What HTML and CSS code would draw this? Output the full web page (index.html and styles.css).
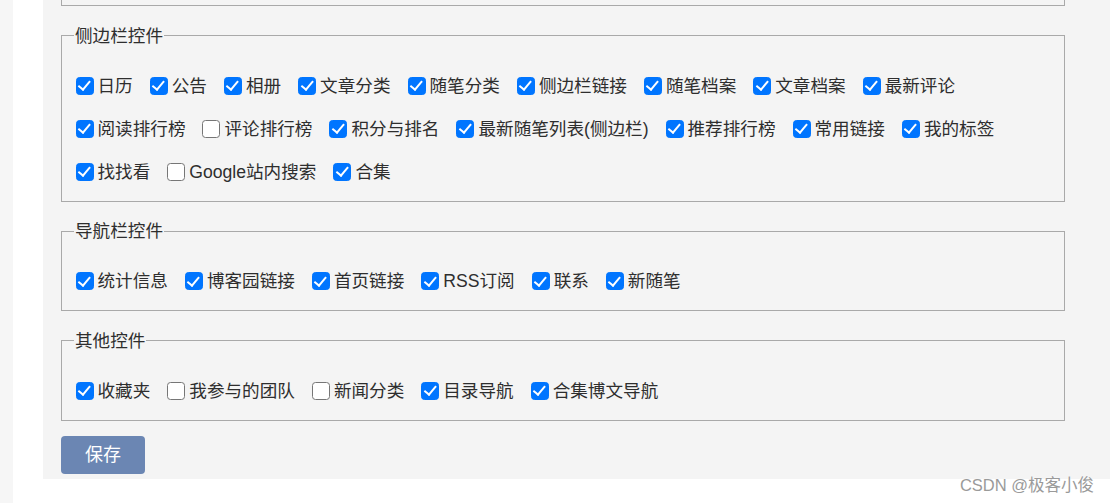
FILE: index.html
```html
<!DOCTYPE html>
<html lang="zh-CN">
<head>
<meta charset="utf-8">
<title>博客设置 - 控件</title>
<link rel="stylesheet" href="styles.css">
</head>
<body>
<div class="page">
  <div class="strip"></div>
  <div class="gutter"></div>
  <main class="panel">
    <div class="fieldset-tail"></div>

    <fieldset class="group">
      <legend>侧边栏控件</legend>
      <div class="options">
        <label class="opt"><input type="checkbox" checked><span>日历</span></label>
        <label class="opt"><input type="checkbox" checked><span>公告</span></label>
        <label class="opt"><input type="checkbox" checked><span>相册</span></label>
        <label class="opt"><input type="checkbox" checked><span>文章分类</span></label>
        <label class="opt"><input type="checkbox" checked><span>随笔分类</span></label>
        <label class="opt"><input type="checkbox" checked><span>侧边栏链接</span></label>
        <label class="opt"><input type="checkbox" checked><span>随笔档案</span></label>
        <label class="opt"><input type="checkbox" checked><span>文章档案</span></label>
        <label class="opt"><input type="checkbox" checked><span>最新评论</span></label>
        <label class="opt"><input type="checkbox" checked><span>阅读排行榜</span></label>
        <label class="opt"><input type="checkbox"><span>评论排行榜</span></label>
        <label class="opt"><input type="checkbox" checked><span>积分与排名</span></label>
        <label class="opt"><input type="checkbox" checked><span>最新随笔列表(侧边栏)</span></label>
        <label class="opt"><input type="checkbox" checked><span>推荐排行榜</span></label>
        <label class="opt"><input type="checkbox" checked><span>常用链接</span></label>
        <label class="opt"><input type="checkbox" checked><span>我的标签</span></label>
        <label class="opt"><input type="checkbox" checked><span>找找看</span></label>
        <label class="opt"><input type="checkbox"><span>Google站内搜索</span></label>
        <label class="opt"><input type="checkbox" checked><span>合集</span></label>
      </div>
    </fieldset>

    <fieldset class="group">
      <legend>导航栏控件</legend>
      <div class="options">
        <label class="opt"><input type="checkbox" checked><span>统计信息</span></label>
        <label class="opt"><input type="checkbox" checked><span>博客园链接</span></label>
        <label class="opt"><input type="checkbox" checked><span>首页链接</span></label>
        <label class="opt"><input type="checkbox" checked><span>RSS订阅</span></label>
        <label class="opt"><input type="checkbox" checked><span>联系</span></label>
        <label class="opt"><input type="checkbox" checked><span>新随笔</span></label>
      </div>
    </fieldset>

    <fieldset class="group">
      <legend>其他控件</legend>
      <div class="options">
        <label class="opt"><input type="checkbox" checked><span>收藏夹</span></label>
        <label class="opt"><input type="checkbox"><span>我参与的团队</span></label>
        <label class="opt"><input type="checkbox"><span>新闻分类</span></label>
        <label class="opt"><input type="checkbox" checked><span>目录导航</span></label>
        <label class="opt"><input type="checkbox" checked><span>合集博文导航</span></label>
      </div>
    </fieldset>

    <div class="actions">
      <button type="button" class="btn-save">保存</button>
    </div>
  </main>
</div>
<div class="watermark">CSDN @极客小俊</div>
</body>
</html>
```

FILE: styles.css
```css
html, body {
  margin: 0;
  padding: 0;
  background: #ffffff;
}

body {
  font-family: "Liberation Sans", "Noto Sans CJK SC", sans-serif;
  color: #2e2e2e;
  position: relative;
  width: 1110px;
  height: 503px;
  overflow: hidden;
}

.page {
  display: flex;
  align-items: flex-start;
}

.strip {
  width: 13px;
  height: 503px;
  background: #f6f6f6;
  flex: none;
}

.gutter {
  width: 30px;
  flex: none;
}

.panel {
  flex: 1;
  background: #f4f4f4;
  padding: 0 45px 6px 18px;
  box-sizing: border-box;
  height: 479px;
}

.fieldset-tail {
  height: 5px;
  border: 1px solid #a9a9a9;
  border-top: none;
}

.group {
  margin: 19.5px 0 0 0;
  padding: 0 12px 7.5px 12px;
  border: 1px solid #a9a9a9;
  min-width: 0;
}

.group legend {
  padding: 0 1px;
  font-size: 17.6px;
  line-height: 20px;
  color: #2e2e2e;
}

.options {
  display: flex;
  flex-wrap: wrap;
  padding: 18.5px 0 0 1.5px;
}

.opt {
  display: inline-flex;
  align-items: center;
  height: 43px;
  margin-right: 17px;
  font-size: 17.6px;
  line-height: 20px;
  color: #2e2e2e;
  cursor: pointer;
}

.opt input {
  appearance: none;
  -webkit-appearance: none;
  position: relative;
  box-sizing: border-box;
  width: 18px;
  height: 18px;
  margin: 0 4px 0 0;
  flex: none;
  border: 1.5px solid #767676;
  border-radius: 3.5px;
  background: #ffffff;
  cursor: pointer;
}

.opt input:checked {
  background: #0075ff;
  border-color: #0075ff;
}

.opt input:checked::after {
  content: "";
  position: absolute;
  left: 4.5px;
  top: 0.5px;
  width: 4.5px;
  height: 9.5px;
  border: solid #ffffff;
  border-width: 0 2.8px 2.8px 0;
  transform: rotate(40deg);
}

.actions {
  margin-top: 15px;
}

.btn-save {
  width: 84px;
  height: 38px;
  border: none;
  border-radius: 4px;
  background: #6b86b3;
  color: #ffffff;
  font-family: "Liberation Sans", "Noto Sans CJK SC", sans-serif;
  font-size: 18px;
  line-height: 20px;
  padding: 0;
  cursor: pointer;
}

.watermark {
  position: absolute;
  right: 16px;
  top: 475px;
  font-family: "Liberation Sans", "Noto Sans CJK SC", sans-serif;
  font-size: 16.5px;
  line-height: 20px;
  color: #9a9a9a;
  text-shadow: 0 0 2px #ffffff;
}
```
